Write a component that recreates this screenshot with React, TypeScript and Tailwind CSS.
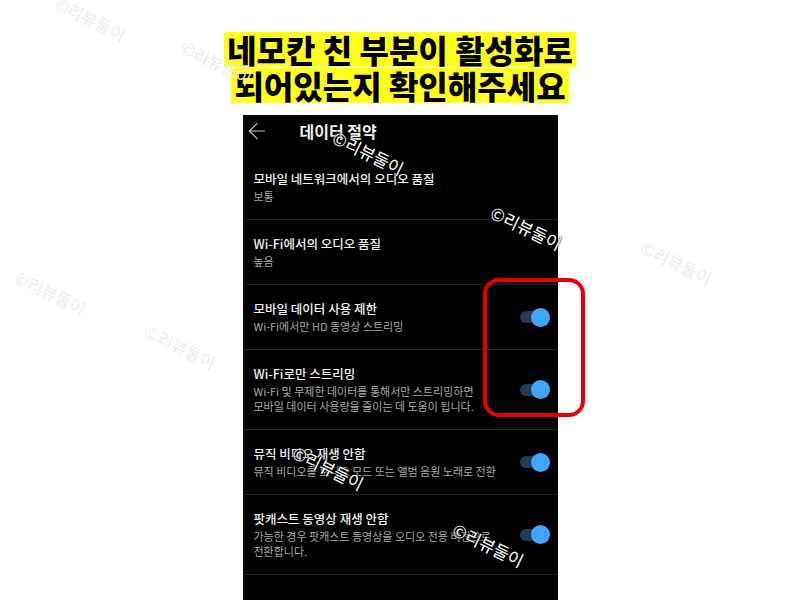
import { ArrowLeft } from "lucide-react";

const KR = "font-['Noto_Sans_CJK_KR','Noto_Sans',sans-serif]";

interface Row {
  title: string;
  sub: string[];
  toggle?: boolean;
}

const ROWS: Row[] = [
  { title: "모바일 네트워크에서의 오디오 품질", sub: ["보통"] },
  { title: "Wi-Fi에서의 오디오 품질", sub: ["높음"] },
  { title: "모바일 데이터 사용 제한", sub: ["Wi-Fi에서만 HD 동영상 스트리밍"], toggle: true },
  {
    title: "Wi-Fi로만 스트리밍",
    sub: ["Wi-Fi 및 무제한 데이터를 통해서만 스트리밍하면", "모바일 데이터 사용량을 줄이는 데 도움이 됩니다."],
    toggle: true,
  },
  { title: "뮤직 비디오 재생 안함", sub: ["뮤직 비디오를 오디오 모드 또는 앨범 음원 노래로 전환"], toggle: true },
  {
    title: "팟캐스트 동영상 재생 안함",
    sub: ["가능한 경우 팟캐스트 동영상을 오디오 전용 버전으로", "전환합니다."],
    toggle: true,
  },
];

function Toggle() {
  return (
    <div className="relative w-[30px] h-[19px] shrink-0">
      <div className="absolute left-0 top-[3.5px] w-[27px] h-[12px] rounded-full bg-[#263b52]" />
      <div className="absolute right-0 top-0 w-[19px] h-[19px] rounded-full bg-[#3ea6ff]" />
    </div>
  );
}

function SettingRow({ row, first }: { row: Row; first: boolean }) {
  return (
    <div
      className={`flex items-center pl-[11px] pr-[8px] pt-[15px] pb-[15px] ${
        first ? "" : "border-t border-[#222222]"
      }`}
    >
      <div className="flex-1 min-w-0">
        <div className="text-[12.5px] leading-[18px] font-medium text-[#f1f1f1]">{row.title}</div>
        <div className="mt-[1px]">
          {row.sub.map((s) => (
            <div key={s} className="text-[11px] leading-[15px] text-[#a8a8a8]">
              {s}
            </div>
          ))}
        </div>
      </div>
      {row.toggle && <Toggle />}
    </div>
  );
}

function Mark({ className, dark }: { className: string; dark?: boolean }) {
  return (
    <div
      className={`absolute whitespace-nowrap rotate-[26deg] text-[17px] pointer-events-none ${
        dark
          ? "text-white [text-shadow:0_0_1px_#000,0_0_2px_#000]"
          : "text-[#ececec]"
      } ${className}`}
    >
      ©리뷰둘이
    </div>
  );
}

export default function App() {
  return (
    <div className={`relative w-[800px] h-[600px] bg-white overflow-hidden flex flex-col items-center ${KR}`}>
      <Mark className="left-[52px] top-[6px]" />
      <Mark className="left-[178px] top-[50px]" />
      <Mark className="left-[12px] top-[280px]" />
      <Mark className="left-[142px] top-[334px]" />
      <Mark className="left-[638px] top-[250px]" />

      <div className="pt-[32px] flex flex-col items-center text-[32px] leading-[35px] font-black text-black">
        <span className="bg-[#ffff1a] px-[3px]">네모칸 친 부분이 활성화로</span>
        <span className="bg-[#ffff1a] px-[3px] mt-[1px]">되어있는지 확인해주세요</span>
      </div>

      <div className="mt-[12px] w-[315px] flex-1 bg-black">
        <div className="h-[32px] flex items-center pl-[1px]">
          <ArrowLeft className="w-[26px] h-[26px] text-[#cfcfcf]" strokeWidth={1} />
          <span className="ml-[30px] text-[16px] font-bold text-[#f1f1f1]">데이터 절약</span>
        </div>
        <div className="mt-[8px]">
          {ROWS.map((r, i) => (
            <SettingRow key={r.title} row={r} first={i === 0} />
          ))}
          <div className="border-t border-[#222222]" />
        </div>
      </div>

      <Mark dark className="left-[330px] top-[140px]" />
      <Mark dark className="left-[488px] top-[215px]" />
      <Mark dark className="left-[290px] top-[455px]" />
      <Mark dark className="left-[450px] top-[532px]" />

      <div className="absolute left-[483px] top-[278px] w-[102px] h-[139px] border-4 border-[#e80000] rounded-[16px]" />
    </div>
  );
}
